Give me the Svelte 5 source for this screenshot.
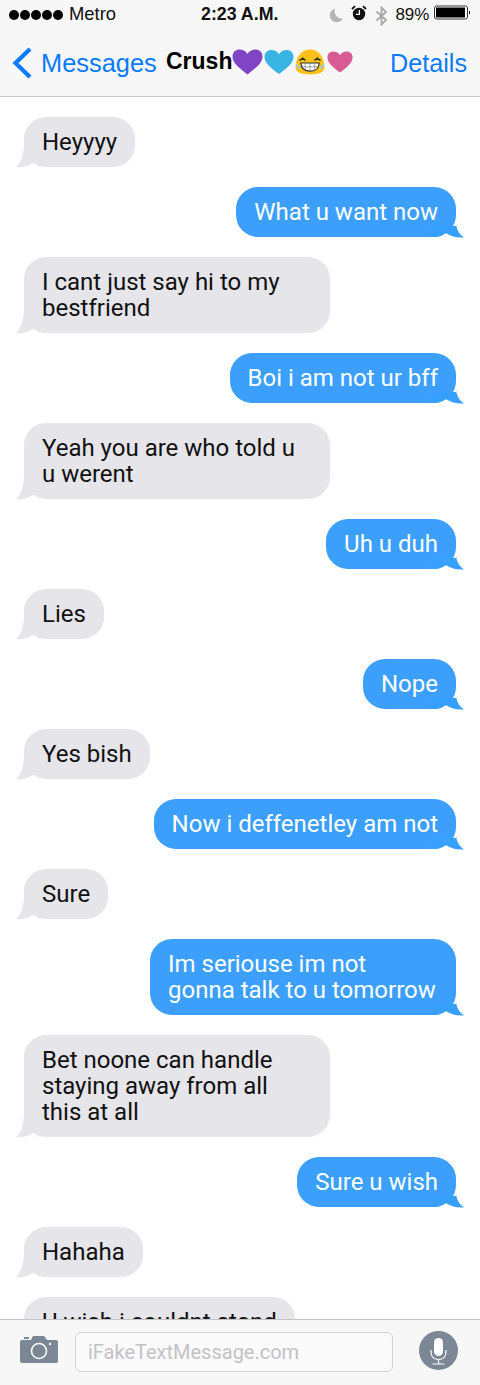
<script>
  const messages = [
    { me: false, text: 'Heyyyy' },
    { me: true, text: 'What u want now' },
    { me: false, text: 'I cant just say hi to my bestfriend' },
    { me: true, text: 'Boi i am not ur bff' },
    { me: false, text: 'Yeah you are who told u u werent' },
    { me: true, text: 'Uh u duh' },
    { me: false, text: 'Lies' },
    { me: true, text: 'Nope' },
    { me: false, text: 'Yes bish' },
    { me: true, text: 'Now i deffenetley am not' },
    { me: false, text: 'Sure' },
    { me: true, text: 'Im seriouse im not gonna talk to u tomorrow' },
    { me: false, text: 'Bet noone can handle staying away from all this at all' },
    { me: true, text: 'Sure u wish' },
    { me: false, text: 'Hahaha' },
    { me: false, text: 'U wish i couldnt stand' }
  ];
</script>

<div class="phone">
  <header class="top">
    <div class="status">
      <div class="carrier">
        <span class="dots"><i></i><i></i><i></i><i></i><i></i></span>
        <span>Metro</span>
      </div>
      <div class="time">2:23 A.M.</div>
      <div class="sys">
        <svg class="moon" width="16" height="16" viewBox="0 0 16 16"><path d="M7 1.5 A7 7 0 1 0 15 11.5 A7.5 7.5 0 0 1 7 1.5Z" fill="#b5b5b5"/></svg>
        <svg class="alarm" width="16" height="16" viewBox="0 0 16 16"><circle cx="8" cy="9" r="6.2" fill="#111"/><path d="M1 4 L4 1.2 M15 4 L12 1.2" stroke="#111" stroke-width="1.8"/><path d="M8.4 5 V9.3 H5" stroke="#fff" stroke-width="1.3" fill="none"/></svg>
        <svg class="bt" width="13" height="20" viewBox="0 0 13 20"><path d="M1.5 5.5 L11 14 L6.5 18.5 V1.5 L11 6 L1.5 14.5" fill="none" stroke="#a8a8a8" stroke-width="1.8"/></svg>
        <span class="pct">89%</span>
        <svg class="batt" width="38" height="16" viewBox="0 0 38 16"><rect x="0.5" y="1" width="33" height="13" rx="2" fill="#fff" stroke="#333"/><rect x="2" y="2.5" width="29" height="10" fill="#000"/><path d="M35 5.5 C36.5 6 36.5 9 35 9.5Z" fill="#111"/></svg>
      </div>
    </div>
    <nav class="nav">
      <div class="back">
        <svg width="22" height="34" viewBox="0 0 22 34"><path d="M19 3 L4.5 17 L19 31" fill="none" stroke="#0a7aff" stroke-width="4.2"/></svg>
        <span>Messages</span>
      </div>
      <div class="title">
        <span>Crush</span>
        <span class="emojis">
          <svg width="31" height="26" viewBox="0 0 31 26"><path d="M15.5 25.5 C9 20 .5 15 .5 7.5 C.5 3 4 .5 7.5 .5 C11 .5 14 2 15.5 5 C17 2 20 .5 23.5 .5 C27 .5 30.5 3 30.5 7.5 C30.5 15 22 20 15.5 25.5Z" fill="#7f45c5"/></svg>
          <svg class="blue" width="30" height="26" viewBox="0 0 31 26"><path d="M15.5 25.5 C9 20 .5 15 .5 7.5 C.5 3 4 .5 7.5 .5 C11 .5 14 2 15.5 5 C17 2 20 .5 23.5 .5 C27 .5 30.5 3 30.5 7.5 C30.5 15 22 20 15.5 25.5Z" fill="#38b5e3"/></svg>
          <svg class="joy" width="30" height="26" viewBox="0 0 31 27">
            <path d="M.5 19 C.5 8 7 .5 15.5 .5 C24 .5 30.5 8 30.5 19 C30.5 24 25 26.5 15.5 26.5 C6 26.5 .5 24 .5 19Z" fill="#fcc21b"/>
            <path d="M4.5 12 L8 9.5 L11 12 M20 12 L23 9.5 L26.5 12" fill="none" stroke="#2f2f2f" stroke-width="1.5"/>
            <path d="M6 14.5 H25 C25 20 21 23 15.5 23 C10 23 6 20 6 14.5Z" fill="#fff" stroke="#2f2f2f" stroke-width="1.2"/>
            <path d="M6.5 18.5 H24.5 M10.5 15 V22 M15.5 15 V23 M20.5 15 V22" stroke="#666" stroke-width=".6"/>
            <path d="M1 15 C3 16 5 18 5 21 C3 21 1 19 1 15Z M30 15 C28 16 26 18 26 21 C28 21 30 19 30 15Z" fill="#8fd0ee"/>
          </svg>
          <svg class="pink" width="26" height="22" viewBox="0 0 31 26"><path d="M15.5 25.5 C9 20 .5 15 .5 7.5 C.5 3 4 .5 7.5 .5 C11 .5 14 2 15.5 5 C17 2 20 .5 23.5 .5 C27 .5 30.5 3 30.5 7.5 C30.5 15 22 20 15.5 25.5Z" fill="#d95b93"/></svg>
        </span>
      </div>
      <div class="details">Details</div>
    </nav>
  </header>

  <main class="list">
    {#each messages as m}
      <div class="row" class:me={m.me}>
        <div class="bubble">
          {m.text}
          {#if m.me}
            <svg class="tail" width="35" height="16" viewBox="0 0 35 16"><path d="M27 0 C27 7 30 12 35 15.5 C27 16 21 14 16 10.5 C13 13 10 15 6 15 H0 V4 H27Z" fill="#379ffd"/></svg>
          {:else}
            <svg class="tail" width="24" height="26" viewBox="0 0 24 26"><path d="M8 0 C8 10 6 20 0 25 C7 26 13 24 18 20 L24 25 V0Z" fill="#e5e5ea"/></svg>
          {/if}
        </div>
      </div>
    {/each}
  </main>

  <footer class="bar">
    <svg class="cam" width="38" height="28" viewBox="0 0 38 28">
      <path d="M2 5 H11 L13 1 H24 L27 5 H36 A2 2 0 0 1 38 7 V26 A2 2 0 0 1 36 28 H2 A2 2 0 0 1 0 26 V7 A2 2 0 0 1 2 5Z" fill="#7b8794"/>
      <rect x="4" y="2" width="5" height="2" fill="#7b8794"/>
      <circle cx="19" cy="16" r="7.5" fill="none" stroke="#fff" stroke-width="1.6"/>
      <circle cx="30" cy="9" r="1.2" fill="#fff"/>
    </svg>
    <div class="input">iFakeTextMessage.com</div>
    <div class="mic">
      <svg width="39" height="39" viewBox="0 0 39 39">
        <rect x="15" y="7" width="9" height="18" rx="4.5" fill="#fff"/>
        <path d="M12 19 V21 C12 26 15 28.5 19.5 28.5 C24 28.5 27 26 27 21 V19 M19.5 28.5 V33 M13.5 33 H25.5" fill="none" stroke="#fff" stroke-width="1.2"/>
      </svg>
    </div>
  </footer>
</div>

<style>
  :global(body) { margin: 0; background: #fff; }
  .phone {
    width: 480px;
    height: 1385px;
    display: flex;
    flex-direction: column;
    overflow: hidden;
    background: #fff;
    font-family: "Liberation Sans", Arial, sans-serif;
  }
  .top {
    height: 96px;
    flex: none;
    background: #f7f7f7;
    border-bottom: 1px solid #c8c8c8;
  }
  .status {
    height: 28px;
    display: flex;
    align-items: center;
    color: #111;
  }
  .carrier {
    width: 201px;
    flex: none;
    box-sizing: border-box;
    padding-left: 9px;
    display: flex;
    align-items: center;
    gap: 6px;
    font-size: 18.4px;
  }
  .dots { display: flex; gap: 1px; margin-top: 2px; }
  .dots i { width: 10px; height: 10px; border-radius: 50%; background: #000; display: block; }
  .time { font-size: 17.8px; font-weight: 700; }
  .sys { margin-left: 50px; display: flex; align-items: center; }
  .moon { margin-right: 7px; margin-top: 2px; }
  .alarm { margin-right: 8px; margin-top: -2px; }
  .bt { margin-right: 7px; margin-top: 3px; }
  .pct { font-size: 17px; width: 39px; margin-top: 1px; }
  .batt { margin-top: -2px; }
  .nav {
    height: 68px;
    display: flex;
    align-items: center;
    padding: 0 13px 0 12px;
  }
  .back {
    display: flex;
    align-items: center;
    gap: 7px;
    color: #0a7aff;
    font-size: 25.4px;
    width: 155px;
    flex: none;
  }
  .back span { margin-top: 2px; }
  .back svg { margin-top: 1px; margin-right: 1px; margin-left: -1px; }
  .title {
    display: flex;
    align-items: center;
    font-size: 23px;
    font-weight: 700;
    color: #000;
    margin-top: -2px;
    margin-left: -1px;
  }
  .emojis { display: flex; align-items: center; margin-top: 2px; }
  .blue { margin-left: 1px; }
  .joy { margin-left: 1px; }
  .pink { margin-left: 2px; }
  .details {
    margin-left: auto;
    color: #0a7aff;
    font-size: 25.2px;
    margin-top: 3px;
  }
  .list {
    flex: 1;
    min-height: 0;
    overflow: hidden;
    padding: 20px 24px 0;
    display: flex;
    flex-direction: column;
    gap: 20px;
    font-family: Roboto, sans-serif;
    font-size: 24px;
    line-height: 26px;
  }
  .row { display: flex; flex: none; }
  .row.me { justify-content: flex-end; }
  .bubble {
    position: relative;
    box-sizing: border-box;
    max-width: 306px;
    padding: 12px 18px;
    border-radius: 22px;
    background: #e5e5ea;
    color: #111;
  }
  .me .bubble {
    background: #3b9ffb;
    color: #fff;
  }
  .tail { position: absolute; left: -8px; bottom: -1px; display: block; }
  .me .tail { left: auto; right: -8px; bottom: -1px; }
  .bar {
    flex: none;
    height: 65px;
    background: #f7f7f7;
    border-top: 1px solid #c4c4c4;
    display: flex;
    align-items: flex-start;
    position: relative;
  }
  .cam { margin: 15px 0 0 20px; flex: none; }
  .input {
    box-sizing: border-box;
    width: 318px;
    height: 40px;
    margin: 12px 0 0 17px;
    padding-left: 12px;
    border: 1px solid #d2d2d2;
    border-radius: 6px;
    background: #fafafa;
    color: #c2c2c7;
    font-family: Roboto, sans-serif;
    font-size: 20px;
    line-height: 38px;
  }
  .mic {
    width: 39px;
    height: 39px;
    margin: 11px 0 0 26px;
    border-radius: 50%;
    background: #7b8794;
  }
  .mic svg { display: block; }
</style>
